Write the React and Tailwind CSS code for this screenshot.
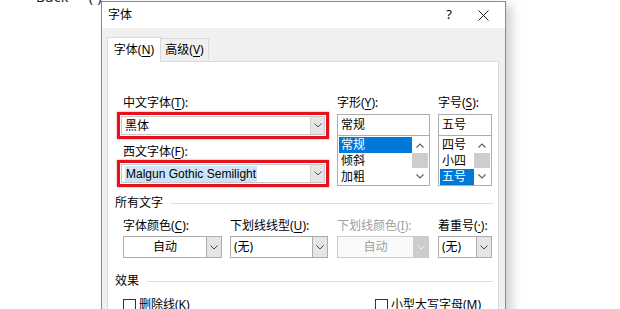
const Chevron = ({ color = "#444" }) => (
  <svg width="8" height="5" viewBox="0 0 8 5">
    <path d="M0.5 0.5 L4 4 L7.5 0.5" fill="none" stroke={color} strokeWidth="1" />
  </svg>
);

const Caret = ({ up }) => (
  <svg width="8" height="5" viewBox="0 0 8 5">
    <path
      d={up ? "M0.5 4.5 L4 1 L7.5 4.5" : "M0.5 0.5 L4 4 L7.5 0.5"}
      fill="none"
      stroke="#606060"
      strokeWidth="1.2"
    />
  </svg>
);

const Key = ({ children }) => <span className="underline underline-offset-2">{children}</span>;

const Label = ({ children, disabled }) => (
  <div className={`h-[16px] leading-[16px] whitespace-nowrap ${disabled ? "text-[#a0a0a0]" : "text-black"}`}>
    {children}
  </div>
);

const Combo = ({ value, center, disabled, className = "" }) => (
  <div
    className={`flex h-[22px] border ${
      disabled ? "border-[#cccccc] bg-[#fafafa]" : "border-[#adadad] bg-white"
    } ${className}`}
  >
    <div
      className={`flex-1 flex items-center px-[3px] whitespace-nowrap ${
        center ? "justify-center" : ""
      } ${disabled ? "text-[#a0a0a0]" : "text-black"}`}
    >
      {value}
    </div>
    <div
      className={`w-[15px] flex items-center justify-center border-l ${
        disabled ? "bg-[#cccccc] border-[#cccccc]" : "bg-[#e5e5e5] border-[#adadad]"
      }`}
    >
      <Chevron color={disabled ? "#f4f4f4" : "#444"} />
    </div>
  </div>
);

const RedCombo = ({ value, selected }) => (
  <div className="-ml-[6px] w-[212px] h-[27px] border-[3px] border-[#e4121b] shadow-[0_0_2px_rgba(200,0,0,0.5)] p-[1px]">
    <div className="flex h-full border border-[#c8c8c8] bg-white">
      <div className="flex-1 flex items-center pl-[3px] whitespace-nowrap">
        {selected ? (
          <span className="bg-[#cce4f7] px-[1px] text-[12px] leading-[16px] font-['Liberation_Sans',sans-serif]">
            {value}
          </span>
        ) : (
          value
        )}
      </div>
      <div className="w-[14px] bg-[#e5e5e5] border-l border-[#d0d0d0] flex items-center justify-center">
        <Chevron color="#555" />
      </div>
    </div>
  </div>
);

const ListBox = ({ value, items, sel }) => (
  <div>
    <div className="h-[22px] border border-[#adadad] bg-white flex items-center px-[3px] leading-[16px]">{value}</div>
    <div className="h-[50px] border border-t-0 border-[#adadad] bg-white flex p-[1px]">
      <div className="flex-1">
        {items.map((it, i) => (
          <div
            key={it}
            className={`h-[16px] leading-[16px] pl-[2px] ${i === sel ? "bg-[#0078d7] text-white" : ""}`}
          >
            {it}
          </div>
        ))}
      </div>
      <div className="w-[16px] flex flex-col">
        <div className="h-[16px] flex items-center justify-center">
          <Caret up />
        </div>
        <div className="h-[15px] bg-[#cdcdcd]" />
        <div className="h-[16px] flex items-center justify-center">
          <Caret />
        </div>
      </div>
    </div>
  </div>
);

const Section = ({ title }) => (
  <div className="flex items-center h-[16px] -ml-[8px] pr-[5px]">
    <span className="leading-[16px]">{title}</span>
    <div className="flex-1 h-px bg-[#dcdcdc] ml-[8px]" />
  </div>
);

const Check = ({ children }) => (
  <div className="flex items-center gap-[3px]">
    <div className="w-[13px] h-[13px] border border-[#333] bg-white" />
    <span className="leading-[16px]">{children}</span>
  </div>
);

export default function App() {
  return (
    <div className="relative w-[620px] h-[309px] overflow-hidden bg-white text-[12px] text-black font-['Noto_Sans','Noto_Sans_CJK_SC',sans-serif]">
      <div className="absolute left-[36px] -top-[14px] text-[14px] text-[#222] tracking-wide">Back · · (·)</div>

      <div className="ml-[101px] mt-[1px] w-[405px] border border-[#8a8a8a] shadow-[6px_4px_10px_rgba(0,0,0,0.18)] bg-[#f0f0f0]">
        {/* title bar */}
        <div className="h-[26px] bg-white flex items-center pl-[6px]">
          <span className="leading-[16px]">字体</span>
          <span className="ml-auto mr-[26px] text-[13px]">?</span>
          <svg width="11" height="11" viewBox="0 0 11 11" className="mr-[16px]">
            <path d="M0.5 0.5 L10.5 10.5 M10.5 0.5 L0.5 10.5" stroke="#222" strokeWidth="1" />
          </svg>
        </div>

        <div className="pt-[9px] pl-[5px] pb-[40px]">
          {/* tabs */}
          <div className="flex items-end">
            <div className="relative z-10 -mb-px w-[54px] h-[25px] bg-white border border-b-0 border-[#d9d9d9] flex items-center justify-center leading-[16px]">
              字体(<Key>N</Key>)
            </div>
            <div className="w-[48px] h-[22px] mb-px bg-[#f0f0f0] border border-l-0 border-b-0 border-[#d9d9d9] flex items-center justify-center leading-[16px]">
              高级(<Key>V</Key>)
            </div>
          </div>

          {/* panel */}
          <div className="w-[392px] bg-white border border-[#d9d9d9] pt-[33px] pl-[15px] pb-[20px]">
            <div className="flex">
              <div className="w-[206px]">
                <Label>
                  中文字体(<Key>T</Key>):
                </Label>
                <div className="mt-[1px]">
                  <RedCombo value="黑体" />
                </div>
                <div className="mt-[5px]">
                  <Label>
                    西文字体(<Key>F</Key>):
                  </Label>
                </div>
                <RedCombo value="Malgun Gothic Semilight" selected />
              </div>
              <div className="ml-[8px] w-[93px]">
                <Label>
                  字形(<Key>Y</Key>):
                </Label>
                <div className="mt-[3px]">
                  <ListBox value="常规" items={["常规", "倾斜", "加粗"]} sel={0} />
                </div>
              </div>
              <div className="ml-[8px] w-[54px]">
                <Label>
                  字号(<Key>S</Key>):
                </Label>
                <div className="mt-[3px]">
                  <ListBox value="五号" items={["四号", "小四", "五号"]} sel={2} />
                </div>
              </div>
            </div>

            <div className="mt-[8px]">
              <Section title="所有文字" />
            </div>

            <div className="flex mt-[7px]">
              <div className="w-[99px]">
                <Label>
                  字体颜色(<Key>C</Key>):
                </Label>
                <Combo className="mt-[2px]" value="自动" center />
              </div>
              <div className="ml-[8px] w-[98px]">
                <Label>
                  下划线线型(<Key>U</Key>):
                </Label>
                <Combo className="mt-[2px]" value="(无)" />
              </div>
              <div className="ml-[9px] w-[92px]">
                <Label disabled>
                  下划线颜色(<Key>I</Key>):
                </Label>
                <Combo className="mt-[2px]" value="自动" center disabled />
              </div>
              <div className="ml-[9px] w-[54px]">
                <Label>
                  着重号(<Key>·</Key>):
                </Label>
                <Combo className="mt-[2px]" value="(无)" />
              </div>
            </div>

            <div className="mt-[15px]">
              <Section title="效果" />
            </div>

            <div className="flex mt-[8px]">
              <div className="w-[252px]">
                <Check>
                  删除线(<Key>K</Key>)
                </Check>
              </div>
              <Check>
                小型大写字母(<Key>M</Key>)
              </Check>
            </div>
          </div>
        </div>
      </div>
    </div>
  );
}
